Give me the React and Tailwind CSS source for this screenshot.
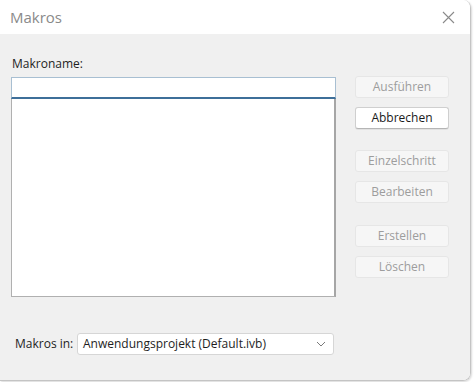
import React from "react";

function Btn({ children, primary }) {
  return (
    <div
      className={
        "h-[22px] w-[94px] flex items-center justify-center rounded-[3px] text-[12px] " +
        (primary
          ? "bg-white border border-[#cfcfcf] border-b-[#b5b5b5] text-[#1a1a1a] shadow-[0_1px_0_rgba(0,0,0,0.06)]"
          : "bg-[#f6f6f6] border border-[#e6e6e6] text-[#9d9d9d]")
      }
    >
      {children}
    </div>
  );
}

export default function App() {
  return (
    <div
      className="w-[474px] h-[382px] bg-white overflow-hidden"
      style={{ fontFamily: '"Open Sans", "Noto Sans", sans-serif' }}
    >
      <div className="w-[471px] h-[381px] flex flex-col rounded-tr-[8px] rounded-br-[8px] border-r border-b border-[#c4c4c4] overflow-hidden shadow-[1px_1px_2px_rgba(0,0,0,0.15)]">
        <div className="h-[34px] bg-white flex items-center justify-between pl-[10px] pr-[14px] shrink-0">
          <span className="text-[15px] text-[#8a8a8a] leading-none">Makros</span>
          <svg width="13" height="13" viewBox="0 0 13 13" className="mr-[1px]">
            <path d="M1 1 L12 12 M12 1 L1 12" stroke="#8a8a8a" strokeWidth="1.1" fill="none" />
          </svg>
        </div>
        <div className="flex-1 bg-[#f0f0f0] flex flex-col pt-[22px] pl-[11px]">
          <div className="flex">
            <div className="w-[325px] flex flex-col">
              <div className="h-[16px] leading-[16px] text-[12px] text-[#1e1e1e] pl-[1px]">Makroname:</div>
              <div className="mt-[5px] h-[22px] bg-white border border-[#a8bfd2] border-b-2 border-b-[#3e6f99]" />
              <div className="h-[198px] bg-white border border-[#b0b0b0] border-t-0 border-r-2 border-r-[#a6a6a6]" />
            </div>
            <div className="ml-[19px] mt-[20px] flex flex-col">
              <Btn>Ausführen</Btn>
              <div className="mt-[9px]">
                <Btn primary>Abbrechen</Btn>
              </div>
              <div className="mt-[21px]">
                <Btn>Einzelschritt</Btn>
              </div>
              <div className="mt-[9px]">
                <Btn>Bearbeiten</Btn>
              </div>
              <div className="mt-[22px]">
                <Btn>Erstellen</Btn>
              </div>
              <div className="mt-[9px]">
                <Btn>Löschen</Btn>
              </div>
            </div>
          </div>
          <div className="mt-[36px] flex items-center">
            <span className="pl-[4px] w-[66px] text-[12px] text-[#1e1e1e]">Makros in:</span>
            <div className="w-[257px] h-[22px] bg-white border border-[#d6d6d6] rounded-[3px] flex items-center justify-between pl-[5px] pr-[7px]">
              <span className="text-[12px] text-[#1e1e1e]">Anwendungsprojekt (Default.ivb)</span>
              <svg width="10" height="6" viewBox="0 0 10 6">
                <path d="M1 1 L5 5 L9 1" stroke="#7a7a7a" strokeWidth="1" fill="none" />
              </svg>
            </div>
          </div>
        </div>
      </div>
    </div>
  );
}
